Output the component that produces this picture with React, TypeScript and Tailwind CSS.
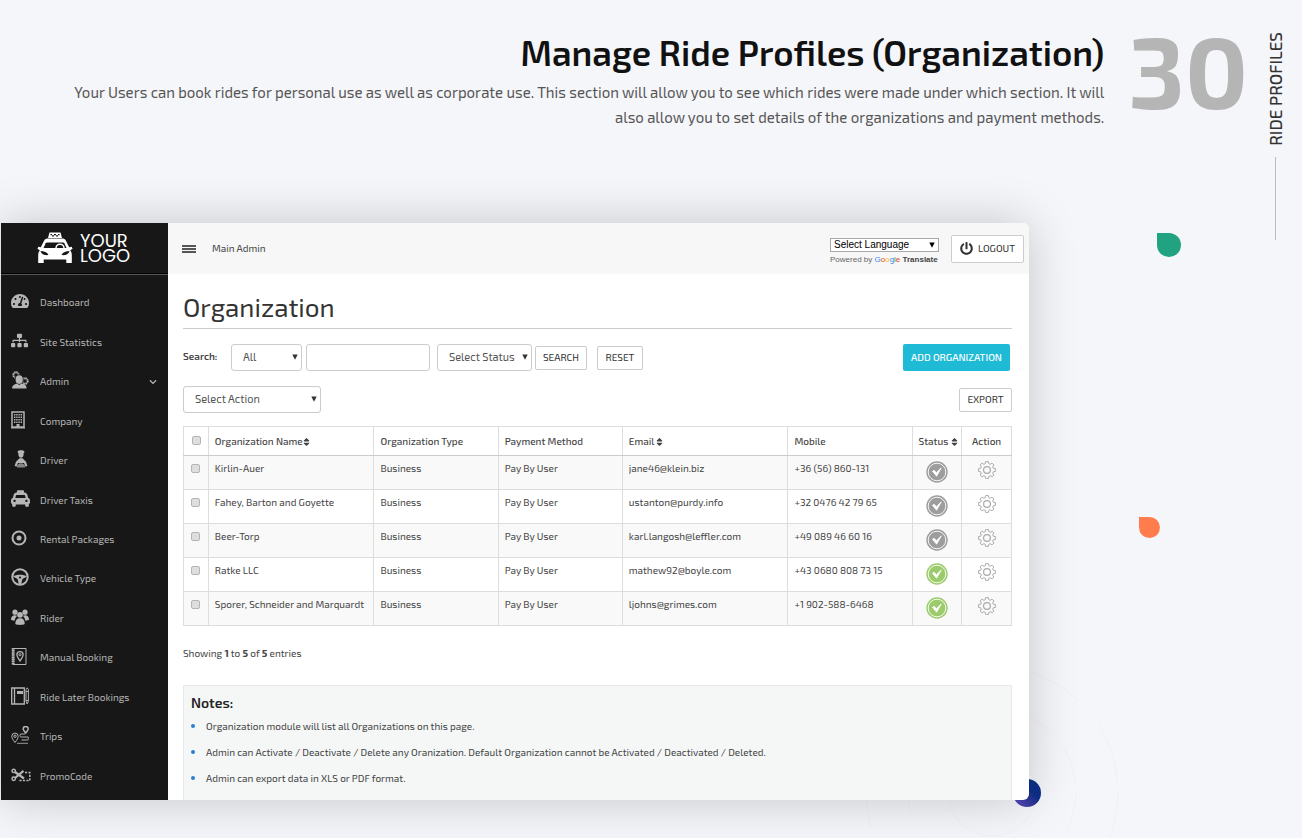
import type { ReactNode } from "react";
import { FaChevronDown, FaPowerOff, FaSitemap, FaSort, FaTachometerAlt, FaTaxi } from "react-icons/fa";

const icons: Record<string, ReactNode> = {
  company: (
    <svg viewBox="0 0 14 18" className="h-[18px] w-[14px]" fill="none" stroke="currentColor">
      <path d="M1 1h12v15H1z" strokeWidth="1.5" />
      <path d="M3 3.8h8M3 6.3h8M3 8.8h8M3 11.3h8" strokeWidth="1.6" strokeDasharray="1.4 0.8" />
      <path d="M0 16.8h14" strokeWidth="1.4" />
      <path d="M5.5 13h3v3.5h-3z" fill="currentColor" stroke="none" />
    </svg>
  ),
  admin: (
    <svg viewBox="0 0 18 18" className="size-[18px]" fill="currentColor">
      <circle cx="5" cy="4" r="2.7" fill="none" stroke="currentColor" strokeWidth="2" strokeDasharray="1.6 0.5" />
      <circle cx="14" cy="10" r="2.7" fill="none" stroke="currentColor" strokeWidth="2" strokeDasharray="1.6 0.5" />
      <ellipse cx="8.2" cy="8.6" rx="4.4" ry="5" fill="#171717" />
      <ellipse cx="8.2" cy="8.6" rx="3.6" ry="4.3" />
      <path d="M1 17.5c0-3 2-4.3 5-5l2.2 1.6 2.4-1.6c3.4.6 5 2 5 5z" />
    </svg>
  ),
  driver: (
    <svg viewBox="0 0 14 18" className="h-[18px] w-[14px]" fill="currentColor">
      <path d="M3.5 2.2C3.5.8 5 .2 7 .2s3.5.6 3.5 2l-.9 1.1v1.2C9.6 6.5 8.5 7.7 7 7.7S4.4 6.5 4.4 4.5V3.3z" />
      <path d="M5.5 8.3h3l3.5 3.4 1.4 4.3-2 .6L10 13H4l-1.4 3.6-2-.6L2 11.7z" />
      <path d="M2.8 17.5a4.2 4.2 0 0 1 8.4 0z" opacity=".7" />
    </svg>
  ),
  rental: (
    <svg viewBox="0 0 16 16" className="size-4" fill="none" stroke="currentColor">
      <circle cx="8" cy="8" r="6.5" strokeWidth="2" />
      <circle cx="8" cy="8" r="2.5" fill="currentColor" stroke="none" />
    </svg>
  ),
  wheel: (
    <svg viewBox="0 0 18 18" className="size-[18px]" fill="none" stroke="currentColor">
      <circle cx="9" cy="9" r="7.7" strokeWidth="2" />
      <path d="M2 8.5C5 6.2 13 6.2 16 8.5L11.5 11l-1.3 5H7.8l-1.3-5z" fill="currentColor" stroke="none" />
      <circle cx="9" cy="9.5" r="1.1" fill="#171717" stroke="none" />
    </svg>
  ),
  rider: (
    <svg viewBox="0 0 18 16" className="h-4 w-[18px]" fill="currentColor">
      <circle cx="4" cy="3.2" r="2.6" />
      <circle cx="14" cy="3.2" r="2.6" />
      <path d="M0 11c0-3.2 1.3-4.7 4-4.7 1 0 1.5.2 2 .5-.8 1.5-2 2.5-2.4 4.9zM18 11c0-3.2-1.3-4.7-4-4.7-1 0-1.5.2-2 .5.8 1.500 2 2.500 2.400 4.900z" />
      <circle cx="9" cy="5.8" r="2.9" />
      <path d="M4.3 15c0-3.7 1.5-5.7 4.7-5.7s4.7 2 4.7 5.7c-2.500 1.200-7 1.200-9.400 0z" />
    </svg>
  ),
  manual: (
    <svg viewBox="0 0 16 19" className="h-[19px] w-4" fill="none" stroke="currentColor">
      <path d="M2 1.5h13v16H2z" />
      <path d="M2.2 1v17" strokeWidth="3" strokeDasharray="1.5 .6" />
      <path d="M9 14C6.8 10.8 5.9 9.3 5.9 7.8a3.1 3.1 0 0 1 6.2 0C12.1 9.3 11.2 10.800 9 14z" strokeWidth="1.3" />
      <circle cx="9" cy="7.7" r="1.1" />
    </svg>
  ),
  later: (
    <svg viewBox="0 0 18 18" className="size-[18px]" fill="none" stroke="currentColor">
      <path d="M.7 1h12.6v16H.7zM3.5 1v16" strokeWidth="1.3" />
      <path d="M6 4h6v3H6z" fill="currentColor" stroke="none" />
      <path d="M15 2.5 16.2.8l1.2 1.7v11.6L16.2 17 15 14.1zM15 4.5h2.4M15 13.5h2.4" />
    </svg>
  ),
  trips: (
    <svg viewBox="0 0 18 18" className="size-[18px]" fill="none" stroke="currentColor">
      <path d="M4 16.5C1.8 13.5.8 12 .8 10.3a3.2 3.2 0 0 1 6.4 0c0 1.700-1 3.200-3.200 6.200z" />
      <circle cx="4" cy="10.3" r="1.2" />
      <path d="M14.7 7C12.9 4.7 12.2 3.9 12.2 2.9a2.5 2.5 0 0 1 5 0c0 1-.7 1.800-2.500 4.100z" strokeWidth="1.5" />
      <path d="M14 8H10.500a1.500 1.500 0 0 0 0 3H16a1.500 1.500 0 0 1 0 3H10.500M6 17.300H17" strokeWidth="1.3" opacity=".65" />
    </svg>
  ),
  promo: (
    <svg viewBox="0 0 20 14" className="h-[14px] w-5" fill="none" stroke="currentColor">
      <circle cx="2.7" cy="2.9" r="1.7" strokeWidth="1.5" />
      <circle cx="2.7" cy="10.8" r="1.7" strokeWidth="1.5" />
      <path d="M4 4 13 10.5M4 10 12.5 2.8" strokeWidth="2.2" />
      <path d="M14 4.5h4.8v8H7" strokeWidth="1.5" strokeDasharray="2.2 1.3" />
    </svg>
  ),
};

const menu: { label: string; icon: ReactNode; open?: boolean }[] = [
  { label: "Dashboard", icon: <FaTachometerAlt className="size-[18px]" /> },
  { label: "Site Statistics", icon: <FaSitemap className="size-[17px]" /> },
  { label: "Admin", icon: icons.admin, open: true },
  { label: "Company", icon: icons.company },
  { label: "Driver", icon: <span className="pl-[3px]">{icons.driver}</span> },
  { label: "Driver Taxis", icon: <FaTaxi className="size-[19px]" /> },
  { label: "Rental Packages", icon: icons.rental },
  { label: "Vehicle Type", icon: icons.wheel },
  { label: "Rider", icon: icons.rider },
  { label: "Manual Booking", icon: icons.manual },
  { label: "Ride Later Bookings", icon: icons.later },
  { label: "Trips", icon: icons.trips },
  { label: "PromoCode", icon: icons.promo },
];

const rows = [
  { name: "Kirlin-Auer", email: "jane46@klein.biz", mobile: "+36 (56) 860-131", active: false },
  { name: "Fahey, Barton and Goyette", email: "ustanton@purdy.info", mobile: "+32 0476 42 79 65", active: false },
  { name: "Beer-Torp", email: "karl.langosh@leffler.com", mobile: "+49 089 46 60 16", active: false },
  { name: "Ratke LLC", email: "mathew92@boyle.com", mobile: "+43 0680 808 73 15", active: true },
  { name: "Sporer, Schneider and Marquardt", email: "ljohns@grimes.com", mobile: "+1 902-588-6468", active: true },
];

const notes = [
  "Organization module will list all Organizations on this page.",
  "Admin can Activate / Deactivate / Delete any Oranization. Default Organization cannot be Activated / Deactivated / Deleted.",
  "Admin can export data in XLS or PDF format.",
];

function TaxiLogo() {
  return (
    <svg viewBox="0 0 36 32" className="h-8 w-9" fill="#fff" aria-hidden="true">
      <path d="M12.5.5h11l1.5 5.5H11z" />
      <path d="M13.5 2h1.5v1.3h-1.5zM17 2h2v1.3h-2zM21 2h1.5v1.3H21zM15 3.300h2v1.300h-2zM19 3.300h2v1.300h-2z" fill="#171717" />
      <path d="M11 6.500h14c1.900 0 3 .6 3.800 2l3.400 6.800 2.400-.6 1 2-2.400 1.600c1.200 1.500 1.600 3 1.600 5.200V31h-5.500v-3.500H6.700V31H1.200v-7.500c0-2.200.4-3.700 1.600-5.200L.4 16.700l1-2 2.400.6 3.400-6.800c.8-1.400 1.900-2 3.800-2z" />
      <path d="M10 10.500h16c.6 0 1 .3 1.300.8L29.500 16h-23l2.200-4.700c.3-.5.7-.8 1.300-.8z" fill="#171717" />
      <path d="M19 16.200a4 4 0 0 1 8 0" fill="none" stroke="#fff" strokeWidth="1.5" />
      <path d="M3.500 19c3.500 0 6.500 1 8 4-3.500.5-7-.3-8-4zM32.500 19c-3.500 0-6.500 1-8 4 3.500.5 7-.3 8-4z" fill="#171717" />
    </svg>
  );
}

function StatusBadge({ active }: { active: boolean }) {
  return (
    <svg viewBox="0 0 22 22" className={`mx-auto size-[22px] ${active ? "text-[#9ccb6c]" : "text-[#9d9d9d]"}`} role="img" aria-label={active ? "Active" : "Inactive"}>
      <circle cx="11" cy="11" r="10.7" fill="currentColor" />
      <circle cx="11" cy="11" r="8.8" fill="none" stroke="#fff" strokeWidth="0.9" />
      <path d="M6.5 10.3 8 9.3l2.5 2.4 4.8-4.9-4.7 8.4z" fill="#fff" stroke="#fff" strokeWidth="0.8" />
    </svg>
  );
}

function Gear() {
  return (
    <svg viewBox="0 0 18 18" className="size-[18px]" fill="none" stroke="#ababab" strokeWidth="1" strokeLinejoin="round" aria-hidden="true">
      <path d="M7.6 .6h2.8l.4 2.1 1.4.6 1.8-1.2 1.9 1.9-1.2 1.8.6 1.4 2.1.4v2.8l-2.1.4-.6 1.4 1.2 1.8-1.9 1.9-1.8-1.2-1.4.6-.4 2.1H7.6l-.4-2.1-1.4-.6-1.8 1.2-1.9-1.9 1.2-1.8-.6-1.4-2.1-.4V7.6l2.1-.4.6-1.4-1.2-1.8 1.9-1.9 1.8 1.2 1.4-.6z" />
      <circle cx="9" cy="9" r="3.4" strokeWidth="1.2" />
    </svg>
  );
}

function Triangle({ className }: { className: string }) {
  return (
    <svg viewBox="0 0 6 6" className={`pointer-events-none absolute size-[6px] ${className}`} fill="currentColor" aria-hidden="true">
      <path d="M.3.5h5.4L3 5.8z" />
    </svg>
  );
}

function Dropdown({ id, label, width }: { id: string; label: string; width: string }) {
  return (
    <div className={`relative ${width}`}>
      <select id={id} aria-label={label} className="block h-[27px] w-full appearance-none rounded-[3px] border border-[#ccc] bg-white pl-[11px] pr-4 text-[11px] text-[#555]">
        <option>{label}</option>
      </select>
      <Triangle className="right-1 top-[10px] text-[#333]" />
    </div>
  );
}

function Check({ label }: { label: string }) {
  return <input type="checkbox" aria-label={label} className="block size-[9px] appearance-none rounded-[2px] border border-[#b5b5b5] bg-[#dedede]" />;
}

const cell = "border border-[#ddd] px-[6px]";
const outlineButton = "h-6 rounded-[2px] border border-[#ccc] bg-white text-[10px] text-[#333]";

export default function App() {
  return (
    <div className="relative min-h-screen overflow-hidden bg-[#f5f6fa] pb-[38px] font-['Exo_2',Roboto,sans-serif] text-[#444]">
      <header className="flex h-[223px] justify-end pr-[17px]">
        <div className="min-w-0 flex-1 pl-[60px] pt-[29px] text-right">
          <h1 className="text-[35px] font-semibold leading-[46px] text-[#111]">Manage Ride Profiles (Organization)</h1>
          <p className="ml-auto mt-[5px] max-w-[1040px] text-[15px] leading-[25px] text-[#555]">
            Your Users can book rides for personal use as well as corporate use. This section will allow you to see which rides were made under which section. It will also allow you to set details of the organizations and payment methods.
          </p>
        </div>
        <div className="ml-6 mt-[19px] text-[100px] font-bold leading-[100px] text-[#b5b5b5]">30</div>
        <div className="ml-[17px] mt-8 flex w-[20px] flex-col items-center">
          <div className="rotate-180 whitespace-nowrap text-[17px] font-medium leading-5 text-[#333] [writing-mode:vertical-rl]">RIDE PROFILES</div>
          <div className="mt-[11px] h-[83px] w-px shrink-0 bg-[#bbb]" />
        </div>
      </header>

      <span className="absolute right-[121px] top-[233px] size-6 rounded-full rounded-tl-none bg-[#21a280]" />
      <span className="absolute right-[142px] top-[517px] size-[21px] rounded-full rounded-tl-none bg-[#ff7d4d]" />

      <div className="relative pl-px pr-[273px]">
        <div className="relative">
          <svg viewBox="0 0 260 260" className="absolute -bottom-[122px] -right-[93px] size-[260px]" fill="none" stroke="#f0f1f5" aria-hidden="true">
            <circle cx="130" cy="130" r="44" />
            <circle cx="130" cy="130" r="84" strokeDasharray="40 20" />
            <circle cx="130" cy="130" r="126" strokeDasharray="60 30" />
          </svg>
          <div className="absolute inset-0 rounded-r-[6px] shadow-[0_0_50px_rgba(0,0,0,0.2)]" />
          <span className="absolute -bottom-[7px] -right-3 size-7 rounded-full bg-linear-to-tr from-[#4a3fa8] from-20% to-[#0b2c80] to-60%" />
          <div className="relative flex overflow-hidden rounded-r-[6px] bg-white">
            <aside className="flex w-[167px] shrink-0 flex-col bg-[#171717]">
              <div className="flex h-[51px] items-center gap-[7px] border-b border-black pl-9 shadow-[0_1px_0_#555]">
                <TaxiLogo />
                <div className="flex flex-col font-[Poppins,Lato] text-[18px] leading-[15px] text-white">
                  <span>YOUR</span>
                  <span>LOGO</span>
                </div>
              </div>
              <nav className="flex flex-1 flex-col pb-1 pt-[9px]">
                <ul className="grid flex-1 auto-rows-fr">
                  {menu.map((item) => (
                    <li key={item.label}>
                      <a href="#" className="flex h-full items-center pl-[10px] pr-[11px] text-[10px] text-[#b5b5b5]">
                        <span className="flex w-[29px] shrink-0 pb-[3px]">{item.icon}</span>
                        <span>{item.label}</span>
                        {item.open && <FaChevronDown className="ml-auto size-2" />}
                      </a>
                    </li>
                  ))}
                </ul>
              </nav>
            </aside>

            <main className="min-w-0 flex-1">
              <div className="flex h-[51px] items-center bg-[#f7f7f7] pl-[14px] pr-[5px]">
                <button type="button" aria-label="Toggle menu" className="flex w-[14px] flex-col gap-px">
                  <span className="h-[2px] w-full bg-[#555]" />
                  <span className="h-[2px] w-full bg-[#555]" />
                  <span className="h-[2px] w-full bg-[#555]" />
                </button>
                <span className="ml-4 text-[10px]">Main Admin</span>
                <div className="ml-auto w-[111px] pt-[5px] font-['Liberation_Sans'] leading-none">
                  <div className="relative w-[109px]">
                    <select aria-label="Select Language" className="block h-[14px] w-full appearance-none border border-[#a9a9a9] bg-white pl-[3px] text-[10px] leading-3 text-black">
                      <option>Select Language</option>
                    </select>
                    <Triangle className="right-1 top-1 text-black" />
                  </div>
                  <div className="mt-[3px] whitespace-nowrap text-[8px] leading-[10px] text-[#666]">
                    Powered by{" "}
                    <b className="font-medium">
                      <span className="text-[#4285f4]">G</span>
                      <span className="text-[#ea4335]">o</span>
                      <span className="text-[#fbbc05]">o</span>
                      <span className="text-[#4285f4]">g</span>
                      <span className="text-[#34a853]">l</span>
                      <span className="text-[#ea4335]">e</span>
                    </b>{" "}
                    <b className="text-[#444]">Translate</b>
                  </div>
                </div>
                <button type="button" className="ml-[10px] flex h-7 w-[73px] items-center justify-center gap-[5px] rounded-[2px] border border-[#ccc] bg-white text-[10px] text-[#333]">
                  <FaPowerOff className="size-[13px]" />
                  LOGOUT
                </button>
              </div>

              <div className="pl-[15px] pr-[17px]">
                <h2 className="border-b border-[#ccc] pb-1 pt-4 text-[26px] leading-[34px] text-[#333]">Organization</h2>
                <form className="mt-[15px] flex items-center" onSubmit={(e) => e.preventDefault()}>
                  <label htmlFor="field" className="w-12 pb-[3px] text-[10px] font-semibold">Search:</label>
                  <Dropdown id="field" label="All" width="w-[71px]" />
                  <input aria-label="Search text" className="ml-1 h-[27px] w-[124px] rounded-[3px] border border-[#ccc] bg-white px-2 text-[11px]" />
                  <div className="ml-[7px]">
                    <Dropdown id="status" label="Select Status" width="w-[95px]" />
                  </div>
                  <button type="submit" className={`${outlineButton} ml-[3px] w-[52px]`}>SEARCH</button>
                  <button type="reset" className={`${outlineButton} ml-[10px] w-[46px]`}>RESET</button>
                  <button type="button" className="ml-auto mr-[2px] h-[27px] w-[107px] rounded-[2px] bg-[#1fbad6] text-[10px] font-medium text-white">ADD ORGANIZATION</button>
                </form>
                <div className="mt-[15px] flex items-center justify-between">
                  <Dropdown id="action" label="Select Action" width="w-[138px]" />
                  <button type="button" className={`${outlineButton} w-[53px]`}>EXPORT</button>
                </div>

                <table className="mt-[13px] w-full table-fixed border-collapse text-left text-[10px]">
                  <colgroup>
                    <col className="w-[3%]" />
                    <col className="w-[20%]" />
                    <col className="w-[15%]" />
                    <col className="w-[15%]" />
                    <col className="w-[20%]" />
                    <col className="w-[15%]" />
                    <col className="w-[6%]" />
                    <col className="w-[6%]" />
                  </colgroup>
                  <thead>
                    <tr className="h-[29px] [&>th]:border-b-[#ccc] [&>th]:font-medium">
                      <th className={`${cell} pb-[2px] pl-2`}><Check label="Select all" /></th>
                      <th className={cell}>Organization Name<FaSort className="inline h-[10px] w-[7px]" /></th>
                      <th className={cell}>Organization Type</th>
                      <th className={cell}>Payment Method</th>
                      <th className={cell}>Email <FaSort className="inline h-[10px] w-[7px]" /></th>
                      <th className={cell}>Mobile</th>
                      <th className={`${cell} whitespace-nowrap text-center`}>Status <FaSort className="inline h-[10px] w-[7px]" /></th>
                      <th className={`${cell} text-center`}>Action</th>
                    </tr>
                  </thead>
                  <tbody>
                    {rows.map((row) => (
                      <tr key={row.name} className="h-[34px] align-top leading-[14px] odd:bg-[#f9f9f9]">
                        <td className={`${cell} pl-[7px] pt-2`}><Check label={`Select ${row.name}`} /></td>
                        <td className={`${cell} whitespace-nowrap pt-[5px]`}>{row.name}</td>
                        <td className={`${cell} pt-[5px]`}>Business</td>
                        <td className={`${cell} pt-[5px]`}>Pay By User</td>
                        <td className={`${cell} pt-[5px]`}>{row.email}</td>
                        <td className={`${cell} pt-[5px]`}>{row.mobile}</td>
                        <td className={`${cell} pt-[5px]`}><StatusBadge active={row.active} /></td>
                        <td className={`${cell} pt-[5px]`}>
                          <button type="button" aria-label={`Actions for ${row.name}`} className="mx-auto block"><Gear /></button>
                        </td>
                      </tr>
                    ))}
                  </tbody>
                </table>

                <p className="mt-5 text-[10px] leading-[14px]">
                  Showing <b>1</b> to <b>5</b> of <b>5</b> entries
                </p>

                <section className="mt-[25px] border border-b-0 border-[#e8e8e8] bg-[#f5f7f7] px-[7px] pb-[9px] pt-[7px]">
                  <h3 className="text-[14px] font-semibold leading-5 text-[#222]">Notes:</h3>
                  <ul className="text-[10px] leading-[26px]">
                    {notes.map((note) => (
                      <li key={note} className="flex items-center gap-[11px]">
                        <span className="size-1 shrink-0 rounded-full bg-[#2b7fd0]" />
                        {note}
                      </li>
                    ))}
                  </ul>
                </section>
              </div>
            </main>
          </div>
        </div>
      </div>
    </div>
  );
}
